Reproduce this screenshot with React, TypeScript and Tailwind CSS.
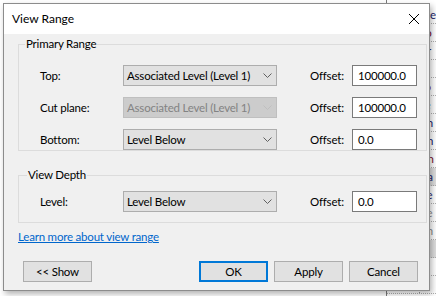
import React from "react";

const bgRows = [
  { t: "me", c: "text-[#1c1c6b]", bg: "" },
  { t: "Jo", c: "text-[#7a1030]", bg: "" },
  { t: "pr", c: "text-[#1c1c6b]", bg: "" },
  { t: "vi", c: "text-[#1c1c6b]", bg: "" },
  { t: "ro", c: "text-[#7a1030]", bg: "" },
  { t: "re", c: "text-[#1c1c6b]", bg: "" },
  { t: "en", c: "text-[#1c1c6b]", bg: "" },
  { t: "un", c: "text-[#1c1c6b]", bg: "" },
  { t: "Ph", c: "text-[#7a1030]", bg: "" },
  { t: "rla", c: "text-[#1c1c6b]", bg: "bg-[#dedede]" },
  { t: "ge", c: "text-[#1c1c6b]", bg: "" },
  { t: "ge", c: "text-[#8a8a8a]", bg: "" },
  { t: "en", c: "text-[#8a8a8a]", bg: "" },
  { t: "ts", c: "text-[#1c1c6b]", bg: "bg-[#dedede]" },
  { t: "•", c: "text-[#c08a20]", bg: "" },
  { t: "•", c: "text-[#c08a20]", bg: "" },
];

function Chevron({ color }: { color: string }) {
  return (
    <svg width="9" height="5" viewBox="0 0 9 5" className="shrink-0">
      <polyline points="0.5,0.5 4.5,4.5 8.5,0.5" fill="none" stroke={color} strokeWidth="1" />
    </svg>
  );
}

function Select({ value, disabled }: { value: string; disabled?: boolean }) {
  return (
    <div
      className={
        disabled
          ? "w-[154px] h-[21px] flex items-center justify-between pl-[3px] pr-[4px] border border-[#bfbfbf] bg-[#cccccc] text-[#838383]"
          : "w-[154px] h-[21px] flex items-center justify-between pl-[3px] pr-[4px] border border-[#adadad] bg-[#e1e1e1] text-black"
      }
    >
      <span className="whitespace-nowrap">{value}</span>
      <Chevron color={disabled ? "#bfbfbf" : "#606060"} />
    </div>
  );
}

function Row({ label, value, offset, disabled }: { label: string; value: string; offset: string; disabled?: boolean }) {
  return (
    <div className="flex items-center h-[21px] pl-[21px]">
      <span className="w-[83px]">{label}</span>
      <Select value={value} disabled={disabled} />
      <span className="ml-[33px] w-[42px]">Offset:</span>
      <div className="w-[65px] h-[21px] border border-[#7a7a7a] bg-white flex items-center pl-[5px]">{offset}</div>
    </div>
  );
}

function Button({ children, primary }: { children: React.ReactNode; primary?: boolean }) {
  return (
    <button
      className={
        primary
          ? "w-[69px] h-[21px] flex items-center justify-center bg-[#e1e1e1] border-2 border-[#0078d7]"
          : "w-[69px] h-[21px] flex items-center justify-center bg-[#e1e1e1] border border-[#adadad]"
      }
    >
      {children}
    </button>
  );
}

export default function App() {
  return (
    <div className="relative w-[436px] h-[296px] overflow-hidden bg-white text-[11.5px] tracking-[-0.2px] leading-[16px] text-black font-['Segoe_UI','Lato',sans-serif]">
      {/* properties palette behind the dialog */}
      <div className="flex h-full">
        <div className="w-[397px]" />
        <div className="flex-1 border-l border-[#7a7a7a] bg-white pt-[6px]">
          {bgRows.map((r, i) => (
            <div key={i} className={`flex h-[18px] border-b border-dotted border-[#b0b0b0] ${r.bg}`}>
              <div className="w-[33px] border-r border-dotted border-[#9a9a9a]" />
              <span className={`pl-[1px] leading-[18px] ${r.c}`}>{r.t}</span>
            </div>
          ))}
        </div>
      </div>

      {/* dialog window */}
      <div className="absolute left-[3px] top-[3px] w-[427px] h-[288px] flex flex-col bg-[#f0f0f0] border border-[#8c8c8c] shadow-[2px_3px_6px_rgba(0,0,0,0.3)]">
        <div className="h-[30px] bg-white flex items-center justify-between pl-[8px] pr-[10px]">
          <span className="text-[12px] tracking-normal">View Range</span>
          <svg width="10" height="10" viewBox="0 0 10 10">
            <path d="M0 0L10 10M10 0L0 10" stroke="#000" strokeWidth="1" />
          </svg>
        </div>

        <div className="flex flex-col pt-[2px]">
          <fieldset className="ml-[14px] w-[409px] border border-[#dcdcdc] pt-[13px] flex flex-col gap-[11px]">
            <legend className="ml-[6px] px-[1px]">Primary Range</legend>
            <Row label="Top:" value="Associated Level (Level 1)" offset="100000.0" />
            <Row label="Cut plane:" value="Associated Level (Level 1)" offset="100000.0" disabled />
            <Row label="Bottom:" value="Level Below" offset="0.0" />
          </fieldset>

          <fieldset className="ml-[14px] mt-[16px] w-[409px] border border-[#dcdcdc] pt-[8px] pb-[10px]">
            <legend className="ml-[8px] px-[1px]">View Depth</legend>
            <Row label="Level:" value="Level Below" offset="0.0" />
          </fieldset>

          <a href="#" className="ml-[14px] mt-[6px] self-start text-[#0066cc] underline">
            Learn more about view range
          </a>

          <div className="flex mt-[16px] ml-[19px]">
            <Button>&lt;&lt; Show</Button>
            <div className="ml-[107px] flex gap-[6px]">
              <Button primary>OK</Button>
              <Button>Apply</Button>
              <Button>Cancel</Button>
            </div>
          </div>
        </div>
      </div>
    </div>
  );
}
